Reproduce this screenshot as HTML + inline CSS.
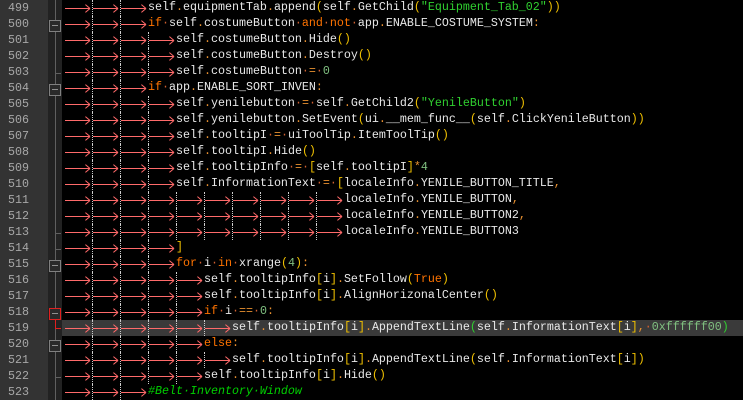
<!DOCTYPE html>
<html><head><meta charset="utf-8"><style>
html,body{margin:0;padding:0;background:#000;width:743px;height:400px;overflow:hidden}
#g{position:absolute;left:0;top:0;width:48px;height:400px;background:#333}
#f{position:absolute;left:48px;top:0;width:14px;height:400px;background:#222}
.n{position:absolute;left:8px;width:34px;font:11.67px "Liberation Mono",monospace;color:#a8a8a8;line-height:16px}
.l{position:absolute;left:64px;height:16px;line-height:16px;white-space:pre;font:11.67px "Liberation Mono",monospace;color:#e8e8e8}
.t{display:inline-block;width:28px;height:16px;position:relative;vertical-align:top}
.t::before{content:"";position:absolute;left:1px;top:8px;width:25px;height:1px;background:#ff6a6a}
.t::after,.t b{content:"";position:absolute;left:20px;top:8px;width:6px;height:1px;background:#ff6a6a;transform-origin:100% 50%;transform:rotate(40deg)}
.t b{transform:rotate(-40deg)}
.t+.t{border-left:1px dotted #ccc;width:27px}
.t+.t::before{left:0;width:25px}.t+.t::after,.t+.t b{left:19px}
.k{color:#ff7300}.o{color:#e89030}.p{color:#f0c000}.s{color:#30d030}.m{color:#80c080}.c{color:#00d000;font-style:italic}.d{color:#d06030}
.bx{position:absolute;left:49px;width:10px;height:10px;border:1px solid #808080;background:#2a2a2a}
.bx::after{content:"";position:absolute;left:2px;top:4px;width:6px;height:1px;background:#909090}
.vl{position:absolute;left:55px;width:1px;background:#606060}
.tk{position:absolute;left:55px;width:6px;height:1px;background:#606060}
</style></head><body>
<div id="g"></div><div id="f"></div>
<div style="position:absolute;left:62px;top:320px;width:681px;height:16px;background:#3a3a3a"></div>
<div class="vl" style="top:0;height:400px"></div>
<div class="tk" style="top:73px"></div>
<div class="tk" style="top:233px"></div>
<div class="tk" style="top:249px"></div>
<div class="tk" style="top:377px"></div>
<div class="bx" style="top:20px"></div>
<div class="bx" style="top:84px"></div>
<div class="bx" style="top:260px"></div>
<div class="bx" style="top:308px;border-color:#e02020"></div>
<div style="position:absolute;left:55px;top:320px;width:1px;height:9px;background:#e02020"></div>
<div style="position:absolute;left:55px;top:328px;width:6px;height:1px;background:#e02020"></div>
<div class="bx" style="top:340px"></div>

<div class="n" style="top:0">499</div><div class="n" style="top:16px">500</div><div class="n" style="top:32px">501</div><div class="n" style="top:48px">502</div><div class="n" style="top:64px">503</div><div class="n" style="top:80px">504</div><div class="n" style="top:96px">505</div><div class="n" style="top:112px">506</div><div class="n" style="top:128px">507</div><div class="n" style="top:144px">508</div><div class="n" style="top:160px">509</div><div class="n" style="top:176px">510</div><div class="n" style="top:192px">511</div><div class="n" style="top:208px">512</div><div class="n" style="top:224px">513</div><div class="n" style="top:240px">514</div><div class="n" style="top:256px">515</div><div class="n" style="top:272px">516</div><div class="n" style="top:288px">517</div><div class="n" style="top:304px">518</div><div class="n" style="top:320px">519</div><div class="n" style="top:336px">520</div><div class="n" style="top:352px">521</div><div class="n" style="top:368px">522</div><div class="n" style="top:384px">523</div>

<div class="l" style="top:0"><i class="t"><b></b></i><i class="t"><b></b></i><i class="t"><b></b></i>self<span class="o">.</span>equipmentTab<span class="o">.</span>append<span class="p">(</span>self<span class="o">.</span>GetChild<span class="p">(</span><span class="s">"Equipment_Tab_02"</span><span class="p">))</span></div>
<div class="l" style="top:16px"><i class="t"><b></b></i><i class="t"><b></b></i><i class="t"><b></b></i><span class="k">if</span><span class="d">·</span>self<span class="o">.</span>costumeButton<span class="d">·</span><span class="k">and</span><span class="d">·</span><span class="k">not</span><span class="d">·</span>app<span class="o">.</span>ENABLE_COSTUME_SYSTEM<span class="o">:</span></div>
<div class="l" style="top:32px"><i class="t"><b></b></i><i class="t"><b></b></i><i class="t"><b></b></i><i class="t"><b></b></i>self<span class="o">.</span>costumeButton<span class="o">.</span>Hide<span class="p">()</span></div>
<div class="l" style="top:48px"><i class="t"><b></b></i><i class="t"><b></b></i><i class="t"><b></b></i><i class="t"><b></b></i>self<span class="o">.</span>costumeButton<span class="o">.</span>Destroy<span class="p">()</span></div>
<div class="l" style="top:64px"><i class="t"><b></b></i><i class="t"><b></b></i><i class="t"><b></b></i><i class="t"><b></b></i>self<span class="o">.</span>costumeButton<span class="d">·</span><span class="o">=</span><span class="d">·</span><span class="m">0</span></div>
<div class="l" style="top:80px"><i class="t"><b></b></i><i class="t"><b></b></i><i class="t"><b></b></i><span class="k">if</span><span class="d">·</span>app<span class="o">.</span>ENABLE_SORT_INVEN<span class="o">:</span></div>
<div class="l" style="top:96px"><i class="t"><b></b></i><i class="t"><b></b></i><i class="t"><b></b></i><i class="t"><b></b></i>self<span class="o">.</span>yenilebutton<span class="d">·</span><span class="o">=</span><span class="d">·</span>self<span class="o">.</span>GetChild2<span class="p">(</span><span class="s">"YenileButton"</span><span class="p">)</span></div>
<div class="l" style="top:112px"><i class="t"><b></b></i><i class="t"><b></b></i><i class="t"><b></b></i><i class="t"><b></b></i>self<span class="o">.</span>yenilebutton<span class="o">.</span>SetEvent<span class="p">(</span>ui<span class="o">.</span>__mem_func__<span class="p">(</span>self<span class="o">.</span>ClickYenileButton<span class="p">))</span></div>
<div class="l" style="top:128px"><i class="t"><b></b></i><i class="t"><b></b></i><i class="t"><b></b></i><i class="t"><b></b></i>self<span class="o">.</span>tooltipI<span class="d">·</span><span class="o">=</span><span class="d">·</span>uiToolTip<span class="o">.</span>ItemToolTip<span class="p">()</span></div>
<div class="l" style="top:144px"><i class="t"><b></b></i><i class="t"><b></b></i><i class="t"><b></b></i><i class="t"><b></b></i>self<span class="o">.</span>tooltipI<span class="o">.</span>Hide<span class="p">()</span></div>
<div class="l" style="top:160px"><i class="t"><b></b></i><i class="t"><b></b></i><i class="t"><b></b></i><i class="t"><b></b></i>self<span class="o">.</span>tooltipInfo<span class="d">·</span><span class="o">=</span><span class="d">·</span><span class="p">[</span>self<span class="o">.</span>tooltipI<span class="p">]</span><span class="o">*</span><span class="m">4</span></div>
<div class="l" style="top:176px"><i class="t"><b></b></i><i class="t"><b></b></i><i class="t"><b></b></i><i class="t"><b></b></i>self<span class="o">.</span>InformationText<span class="d">·</span><span class="o">=</span><span class="d">·</span><span class="p">[</span>localeInfo<span class="o">.</span>YENILE_BUTTON_TITLE<span class="o">,</span></div>
<div class="l" style="top:192px"><i class="t"><b></b></i><i class="t"><b></b></i><i class="t"><b></b></i><i class="t"><b></b></i><i class="t"><b></b></i><i class="t"><b></b></i><i class="t"><b></b></i><i class="t"><b></b></i><i class="t"><b></b></i><i class="t"><b></b></i>localeInfo<span class="o">.</span>YENILE_BUTTON<span class="o">,</span></div>
<div class="l" style="top:208px"><i class="t"><b></b></i><i class="t"><b></b></i><i class="t"><b></b></i><i class="t"><b></b></i><i class="t"><b></b></i><i class="t"><b></b></i><i class="t"><b></b></i><i class="t"><b></b></i><i class="t"><b></b></i><i class="t"><b></b></i>localeInfo<span class="o">.</span>YENILE_BUTTON2<span class="o">,</span></div>
<div class="l" style="top:224px"><i class="t"><b></b></i><i class="t"><b></b></i><i class="t"><b></b></i><i class="t"><b></b></i><i class="t"><b></b></i><i class="t"><b></b></i><i class="t"><b></b></i><i class="t"><b></b></i><i class="t"><b></b></i><i class="t"><b></b></i>localeInfo<span class="o">.</span>YENILE_BUTTON3</div>
<div class="l" style="top:240px"><i class="t"><b></b></i><i class="t"><b></b></i><i class="t"><b></b></i><i class="t"><b></b></i><span class="p">]</span></div>
<div class="l" style="top:256px"><i class="t"><b></b></i><i class="t"><b></b></i><i class="t"><b></b></i><i class="t"><b></b></i><span class="k">for</span><span class="d">·</span>i<span class="d">·</span><span class="k">in</span><span class="d">·</span>xrange<span class="p">(</span><span class="m">4</span><span class="p">)</span><span class="o">:</span></div>
<div class="l" style="top:272px"><i class="t"><b></b></i><i class="t"><b></b></i><i class="t"><b></b></i><i class="t"><b></b></i><i class="t"><b></b></i>self<span class="o">.</span>tooltipInfo<span class="p">[</span>i<span class="p">]</span><span class="o">.</span>SetFollow<span class="p">(</span><span class="k">True</span><span class="p">)</span></div>
<div class="l" style="top:288px"><i class="t"><b></b></i><i class="t"><b></b></i><i class="t"><b></b></i><i class="t"><b></b></i><i class="t"><b></b></i>self<span class="o">.</span>tooltipInfo<span class="p">[</span>i<span class="p">]</span><span class="o">.</span>AlignHorizonalCenter<span class="p">()</span></div>
<div class="l" style="top:304px"><i class="t"><b></b></i><i class="t"><b></b></i><i class="t"><b></b></i><i class="t"><b></b></i><i class="t"><b></b></i><span class="k">if</span><span class="d">·</span>i<span class="d">·</span><span class="o">==</span><span class="d">·</span><span class="m">0</span><span class="o">:</span></div>
<div class="l" style="top:320px"><i class="t"><b></b></i><i class="t"><b></b></i><i class="t"><b></b></i><i class="t"><b></b></i><i class="t"><b></b></i><i class="t"><b></b></i>self<span class="o">.</span>tooltipInfo<span class="p">[</span>i<span class="p">]</span><span class="o">.</span>AppendTextLine<span class="s">(</span>self<span class="o">.</span>InformationText<span class="p">[</span>i<span class="p">]</span><span class="o">,</span><span class="d">·</span><span class="m">0xffffff00</span><span class="s">)</span></div>
<div class="l" style="top:336px"><i class="t"><b></b></i><i class="t"><b></b></i><i class="t"><b></b></i><i class="t"><b></b></i><i class="t"><b></b></i><span class="k">else</span><span class="o">:</span></div>
<div class="l" style="top:352px"><i class="t"><b></b></i><i class="t"><b></b></i><i class="t"><b></b></i><i class="t"><b></b></i><i class="t"><b></b></i><i class="t"><b></b></i>self<span class="o">.</span>tooltipInfo<span class="p">[</span>i<span class="p">]</span><span class="o">.</span>AppendTextLine<span class="p">(</span>self<span class="o">.</span>InformationText<span class="p">[</span>i<span class="p">])</span></div>
<div class="l" style="top:368px"><i class="t"><b></b></i><i class="t"><b></b></i><i class="t"><b></b></i><i class="t"><b></b></i><i class="t"><b></b></i>self<span class="o">.</span>tooltipInfo<span class="p">[</span>i<span class="p">]</span><span class="o">.</span>Hide<span class="p">()</span></div>
<div class="l" style="top:384px"><i class="t"><b></b></i><i class="t"><b></b></i><i class="t"><b></b></i><span class="c">#Belt·Inventory·Window</span></div>
</body></html>
